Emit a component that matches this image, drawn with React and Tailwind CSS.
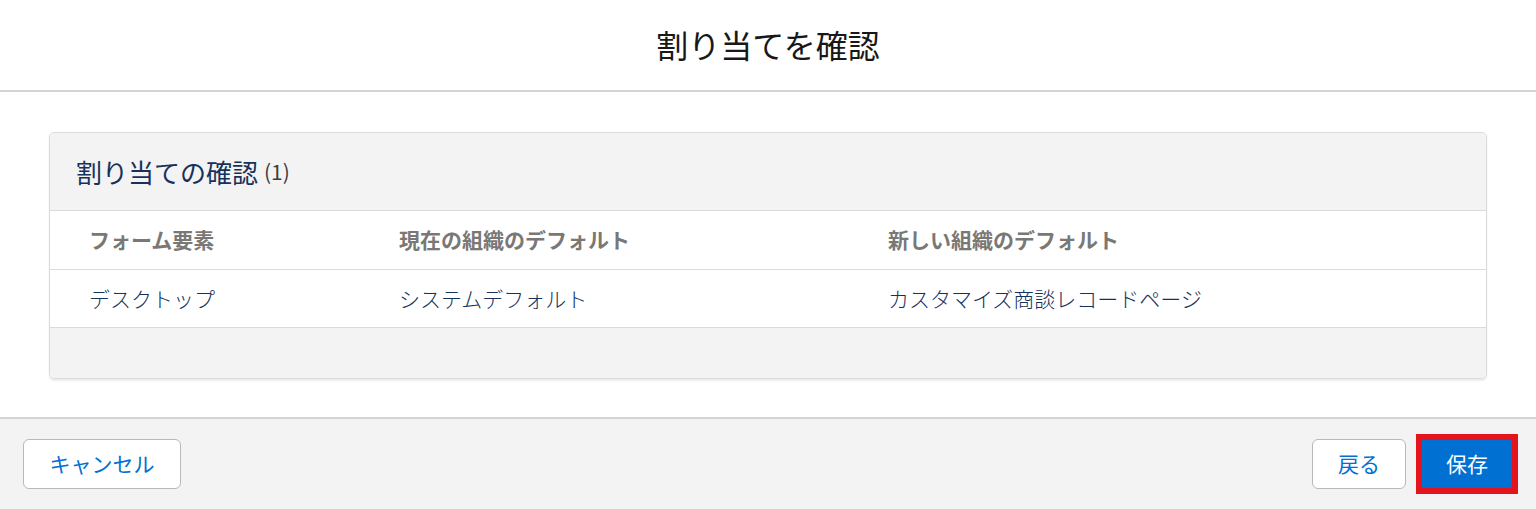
const font = { fontFamily: '"Noto Sans CJK JP", "Noto Sans", sans-serif' };

const rows = [
  { element: 'デスクトップ', current: 'システムデフォルト', next: 'カスタマイズ商談レコードページ' }
];

const App = () => {
  return (
    <div className="flex h-[509px] w-[1536px] flex-col bg-white" style={font}>
      <div className="flex h-[92px] shrink-0 items-center justify-center border-b-2 border-[#d4d4d4] pb-[2px]">
        <h1 className="text-[32px] text-[#181818]">割り当てを確認</h1>
      </div>

      <div className="flex-1 px-[49px] pt-[40px]">
        <div className="overflow-hidden rounded-[5px] border border-[#dddbda] shadow-[0_2px_2px_rgba(0,0,0,0.08)]">
          <div className="flex h-[77px] items-center bg-[#f3f3f3] pl-[26px] text-[26px] text-[#16325c]">
            割り当ての確認
            <span className="ml-[6px] text-[21px] text-[#3e3e3c]">(1)</span>
          </div>
          <div className="grid h-[59px] grid-cols-[310px_489px_1fr] items-center border-t border-[#dddbda] bg-white pl-[39px] text-[21px] font-bold text-[#7a7875]">
            <div>フォーム要素</div>
            <div>現在の組織のデフォルト</div>
            <div>新しい組織のデフォルト</div>
          </div>
          {rows.map((row) => (
            <div
              key={row.element}
              className="grid h-[58px] grid-cols-[310px_489px_1fr] items-center border-t border-[#dddbda] bg-white pl-[39px] text-[21px] font-light text-[#16325c]"
            >
              <div>{row.element}</div>
              <div>{row.current}</div>
              <div>{row.next}</div>
            </div>
          ))}
          <div className="h-[51px] border-t border-[#dddbda] bg-[#f3f3f3]" />
        </div>
      </div>

      <div className="flex h-[92px] shrink-0 items-center justify-between border-t-2 border-[#d4d4d4] bg-[#f3f3f3] pl-[23px] pr-[22px]">
        <button className="h-[50px] w-[158px] rounded-[6px] border border-[#b8b8b8] bg-white text-[21px] text-[#0070d2]">
          キャンセル
        </button>
        <div className="flex items-center gap-[14px]">
          <button className="h-[50px] w-[94px] rounded-[6px] border border-[#b8b8b8] bg-white text-[21px] text-[#0070d2]">
            戻る
          </button>
          <div className="relative">
            <button className="h-[50px] w-[94px] rounded-[4px] bg-[#0070d2] text-[21px] text-white">
              保存
            </button>
            <div className="pointer-events-none absolute -bottom-[5px] -left-[4px] -right-[4px] -top-[5px] border-[6px] border-[#e5141c]" />
          </div>
        </div>
      </div>
    </div>
  );
};

export default App;
